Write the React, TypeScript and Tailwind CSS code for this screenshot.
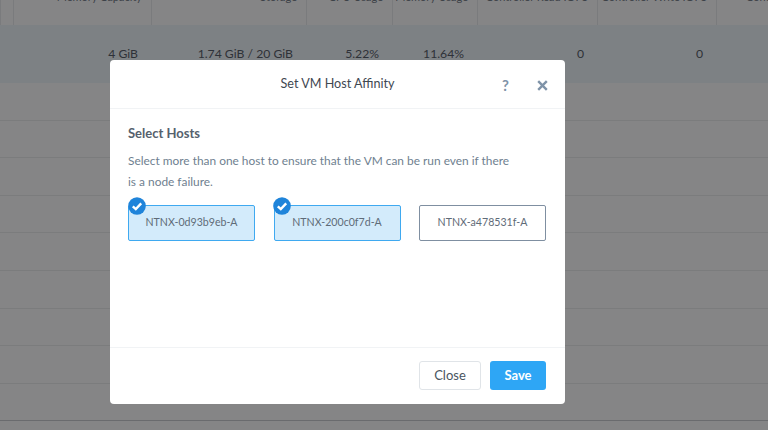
const font = "font-['Lato','Noto_Sans',sans-serif]";

const cols = "grid grid-cols-[13px_138px_155px_86px_85px_120px_119px_52px]";

function HeaderCell({ children }: { children?: React.ReactNode }) {
  return (
    <div className="h-[25px] overflow-hidden whitespace-nowrap border-l border-[#e6e8ea] pr-[9px] text-right text-[11px] leading-[14px] text-[#5f6a76]">
      <div className="-mt-[10px]">{children}</div>
    </div>
  );
}

function BodyCell({ children }: { children?: React.ReactNode }) {
  return (
    <div className="flex h-[58px] items-center justify-end whitespace-nowrap pr-[13px] text-[12.2px] text-[#3f4852]">
      {children}
    </div>
  );
}

function Host({ name, selected }: { name: string; selected?: boolean }) {
  return (
    <div className="relative h-[36px] w-[127px]">
      <div
        className={
          selected
            ? "flex h-full items-center justify-center rounded-[2px] border border-[#3fa9f0] bg-[#d3ebfb] text-[10.6px] text-[#5f6b78]"
            : "flex h-full items-center justify-center rounded-[2px] border border-[#7f8fa1] bg-white text-[10.6px] text-[#5f6b78]"
        }
      >
        {name}
      </div>
      {selected && (
        <svg className="absolute -left-[0.5px] -top-[8px]" width="18" height="18" viewBox="0 0 18 18">
          <circle cx="9" cy="9" r="8.8" fill="#1f84da" />
          <path d="M4.8 9.3 L7.8 12.1 L13.2 6.4" fill="none" stroke="#fff" strokeWidth="2.4" />
        </svg>
      )}
    </div>
  );
}

export default function App() {
  return (
    <div className={`relative h-[430px] w-[768px] overflow-hidden bg-white ${font}`}>
      <div className={cols}>
        <HeaderCell />
        <HeaderCell>Memory Capacity</HeaderCell>
        <HeaderCell>Storage</HeaderCell>
        <HeaderCell>CPU Usage</HeaderCell>
        <HeaderCell>Memory Usage</HeaderCell>
        <HeaderCell>Controller Read IOPS</HeaderCell>
        <HeaderCell>Controller Write IOPS</HeaderCell>
        <div className="h-[25px] overflow-hidden whitespace-nowrap border-l border-[#e6e8ea] pl-[29px] text-[11px] leading-[14px] text-[#5f6a76]">
          <div className="-mt-[10px]">Controller</div>
        </div>
      </div>
      <div className={`${cols} bg-[#eef5fb]`}>
        <div />
        <BodyCell>4 GiB</BodyCell>
        <BodyCell>1.74 GiB / 20 GiB</BodyCell>
        <BodyCell>5.22%</BodyCell>
        <BodyCell>11.64%</BodyCell>
        <BodyCell>0</BodyCell>
        <BodyCell>0</BodyCell>
        <div />
      </div>
      {Array.from({ length: 8 }).map((_, i) => (
        <div key={i} className="h-[37.6px] border-b border-[#e8eaec]" />
      ))}
      <div className="h-[37.6px] border-b border-[#c4c6c9]" />

      <div className="absolute inset-0 bg-[#202022]/55">
        <div className="absolute left-[110px] top-[60px] flex h-[344px] w-[455px] flex-col rounded-[4px] bg-white">
          <div className="relative flex h-[49px] shrink-0 items-center justify-center border-b border-[#f1f3f5] text-[12.6px] text-[#3f4852]">
            Set VM Host Affinity
            <span className="absolute left-[392px] top-[15px] text-[15px] font-bold leading-[20px] text-[#7f93a8]">?</span>
            <svg className="absolute left-[427px] top-[20px]" width="11" height="11" viewBox="0 0 11 11">
              <path d="M1.2 1.2 L9.8 9.8 M9.8 1.2 L1.2 9.8" stroke="#7f93a8" strokeWidth="2.4" />
            </svg>
          </div>
          <div className="flex-1 px-[18px] pt-[16px]">
            <div className="text-[13px] font-bold leading-[16px] text-[#56616d]">Select Hosts</div>
            <p className="mt-[9px] max-w-[388px] text-[11.9px] leading-[21px] text-[#6f7f90]">
              Select more than one host to ensure that the VM can be run even if there is a node failure.
            </p>
            <div className="mt-[13px] flex gap-[18.5px]">
              <Host name="NTNX-0d93b9eb-A" selected />
              <Host name="NTNX-200c0f7d-A" selected />
              <Host name="NTNX-a478531f-A" />
            </div>
          </div>
          <div className="flex h-[57px] shrink-0 items-start justify-end gap-[9px] border-t border-[#f1f3f5] pr-[19px] pt-[13px]">
            <button className="h-[29px] w-[62px] rounded-[3px] border border-[#e0e4e8] bg-white text-[13px] text-[#4a5561]">
              Close
            </button>
            <button className="h-[29px] w-[56px] rounded-[3px] bg-[#2ea6f5] text-[13px] font-bold text-white">
              Save
            </button>
          </div>
        </div>
      </div>
    </div>
  );
}
